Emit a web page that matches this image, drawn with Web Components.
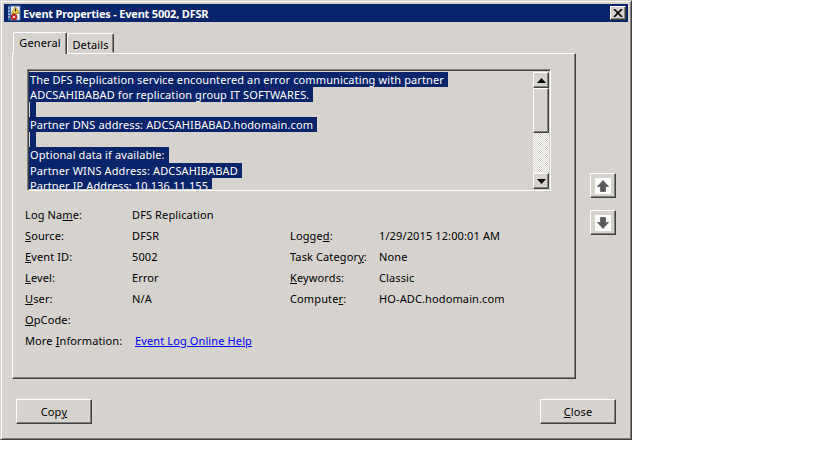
<!DOCTYPE html>
<html lang="en">

<head>
    <meta charset="UTF-8">
    <title>Event Properties</title>
    <style>
        html, body { margin: 0; background: #fff; }
        body { font: 11px "Noto Sans", "DejaVu Sans", sans-serif; letter-spacing: .12px; color: #000; }
    </style>
</head>

<body>
    <template id="field-row">
        <style>
            :host { display: grid; grid-template-columns: var(--label-width, 107px) 1fr; height: 21px; align-items: center; white-space: nowrap; }
        </style>
        <div><slot name="label"></slot></div>
        <div><slot></slot></div>
    </template>

    <script>
        const BEVEL = `border: 1px solid; border-color: #fff #404040 #404040 #fff; box-shadow: inset -1px -1px 0 #808080; background: #d6d3ce; box-sizing: border-box;`;

        class EvField extends HTMLElement {
            constructor() {
                super();
                this.attachShadow({ mode: 'open' }).appendChild(document.getElementById('field-row').content.cloneNode(true));
            }
        }

        class WinButton extends HTMLElement {
            constructor() {
                super();
                this.attachShadow({ mode: 'open' }).innerHTML = `
                    <style>
                        :host { display: flex; align-items: center; justify-content: center; width: 76px; height: 25px; ${BEVEL} }
                    </style>
                    <slot></slot>`;
            }
        }

        class ArrowButton extends HTMLElement {
            constructor() {
                super();
                this.attachShadow({ mode: 'open' });
            }

            connectedCallback() {
                const down = this.getAttribute('dir') === 'down';
                const pts = down ? '4.5,1.5 9.5,1.5 9.5,6.5 12.5,6.5 7,12.5 1.5,6.5 4.5,6.5' : '7,1.5 12.5,7.5 9.5,7.5 9.5,12.5 4.5,12.5 4.5,7.5 1.5,7.5';
                this.shadowRoot.innerHTML = `
                    <style>
                        :host { display: flex; align-items: center; justify-content: center; width: 26px; height: 25px; ${BEVEL} }
                        div { width: 16px; height: 16px; background: #fff; display: flex; align-items: center; justify-content: center; }
                        svg { display: block; }
                    </style>
                    <div><svg width="14" height="14" viewBox="0 0 14 14"><polygon points="${pts}" fill="#595959" stroke="#6e6e6e" stroke-width="1"/></svg></div>`;
            }
        }

        class EvScrollbar extends HTMLElement {
            constructor() {
                super();
                const arrow = pts => `<svg width="9" height="5" viewBox="0 0 9 5"><polygon points="${pts}" fill="#000"/></svg>`;
                this.attachShadow({ mode: 'open' }).innerHTML = `
                    <style>
                        :host { display: flex; flex-direction: column; width: 16px; height: 100%; flex: none; box-sizing: border-box;
                            background-color: #fff; background-image: conic-gradient(#d6d3ce 25%, #fff 0 50%, #d6d3ce 0 75%, #fff 0); background-size: 2px 2px; }
                        .b { ${BEVEL} width: 16px; display: flex; align-items: center; justify-content: center; flex: none; }
                        .arrow { height: 16px; }
                        .thumb { height: 45px; }
                        .gap { flex: 1; }
                    </style>
                    <div class="b arrow">${arrow('4.5,0 9,5 0,5')}</div>
                    <div class="b thumb"></div>
                    <div class="gap"></div>
                    <div class="b arrow">${arrow('0,0 9,0 4.5,5')}</div>`;
            }
        }

        class EvMessage extends HTMLElement {
            constructor() {
                super();
                this.attachShadow({ mode: 'open' }).innerHTML = `
                    <style>
                        :host { display: flex; height: 122px; width: 524px; box-sizing: border-box; border: 1px solid; border-color: #808080 #fff #fff #808080; box-shadow: inset 1px 1px 0 #404040; padding: 2px 1px 1px 1px; }
                        .text { flex: 1; overflow: hidden; min-width: 0; }
                        ::slotted(div) { background: #08246b; color: #fff; width: fit-content; height: 15.1px; line-height: 15px; white-space: pre; padding: 0 1px; }
                        ::slotted(.blank) { width: 6px; margin-left: 1px; padding: 0; }
                    </style>
                    <div class="text"><slot></slot></div>
                    <ev-scrollbar></ev-scrollbar>`;
            }
        }

        class EvTabs extends HTMLElement {
            constructor() {
                super();
                this.attachShadow({ mode: 'open' }).innerHTML = `
                    <style>
                        :host { display: flex; align-items: flex-end; height: 23px; padding-left: 1px; }
                        .tab { box-sizing: border-box; border: 1px solid; border-color: #fff #404040 transparent #fff; box-shadow: inset -1px 0 0 #808080; border-radius: 2px 2px 0 0; display: flex; align-items: center; justify-content: center; background: #d6d3ce; }
                        .on { width: 54px; height: 22px; margin-bottom: -1px; position: relative; z-index: 1; border-bottom: 0; padding-bottom: 2px; }
                        .off { width: 47px; height: 20px; padding-top: 2px; }
                    </style>
                    <div class="tab on">General</div>
                    <div class="tab off">Details</div>`;
            }
        }

        class EvTitlebar extends HTMLElement {
            constructor() {
                super();
                this.attachShadow({ mode: 'open' }).innerHTML = `
                    <style>
                        :host { display: flex; align-items: center; height: 18px; background: #08246b; color: #fff; font-weight: 700; letter-spacing: -.2px; padding: 0 2px 0 2px; white-space: nowrap; }
                        svg { flex: none; margin-right: 1px; display: block; }
                        span { flex: 1; }
                        .x { ${BEVEL} width: 16px; height: 14px; display: flex; align-items: center; justify-content: center; }
                    </style>
                    <svg width="16" height="16" viewBox="0 0 16 16">
                        <rect x="3" y="1" width="11" height="14" fill="#eef2fa" stroke="#5578b0"/>
                        <rect x="2" y="1" width="3" height="14" fill="#3a64a8"/>
                        <path d="M2 3h2M2 6h2M2 9h2M2 12h2" stroke="#dfe8f6"/>
                        <polygon points="9.5,1.5 13.5,8.5 5.5,8.5" fill="#f6cc3a" stroke="#8a6a10" stroke-width=".6"/>
                        <rect x="9" y="3.5" width="1" height="3" fill="#222"/>
                        <circle cx="8" cy="12" r="3" fill="#d8282c" stroke="#7a1014" stroke-width=".6"/>
                        <circle cx="8" cy="12" r="1.1" fill="#fff"/>
                    </svg>
                    <span><slot></slot></span>
                    <div class="x"><svg width="10" height="8" viewBox="0 0 10 8" style="margin:0"><path d="M1 0l8 8M9 0l-8 8" fill="none" stroke="#000" stroke-width="1.7"/></svg></div>`;
            }
        }

        class EvWindow extends HTMLElement {
            constructor() {
                super();
                this.attachShadow({ mode: 'open' }).innerHTML = `
                    <style>
                        :host { display: block; box-sizing: border-box; width: 632px; height: 440px; background: #d6d3ce; border: 1px solid; border-color: #d6d3ce #404040 #404040 #d6d3ce; box-shadow: inset 1px 1px 0 #fff, inset -1px -1px 0 #808080; padding: 3px; }
                    </style>
                    <slot></slot>`;
            }
        }

        class EvPanel extends HTMLElement {
            constructor() {
                super();
                this.attachShadow({ mode: 'open' }).innerHTML = `
                    <style>
                        :host { display: block; box-sizing: border-box; width: 565px; height: 326px; border: 1px solid; border-color: #fff #404040 #404040 #fff; box-shadow: inset -1px -1px 0 #808080; padding: 15px 0 0 14px; }
                    </style>
                    <slot></slot>`;
            }
        }

        customElements.define('ev-field', EvField);
        customElements.define('win-button', WinButton);
        customElements.define('arrow-button', ArrowButton);
        customElements.define('ev-scrollbar', EvScrollbar);
        customElements.define('ev-message', EvMessage);
        customElements.define('ev-tabs', EvTabs);
        customElements.define('ev-titlebar', EvTitlebar);
        customElements.define('ev-window', EvWindow);
        customElements.define('ev-panel', EvPanel);
    </script>

    <style>
        .content { padding: 8px 12px 0 8px; }
        .main { display: flex; }
        .side { display: flex; flex-direction: column; gap: 12px; padding: 120px 0 0 14px; }
        .fields { display: grid; grid-template-columns: 265px 1fr; margin: 13px 0 0 -2px; }
        .fields .col { display: flex; flex-direction: column; }
        .fields .right { padding-top: 21px; --label-width: 89px; }
        .more { --label-width: 110px; }
        .buttons { display: flex; justify-content: space-between; padding: 20px 0 0 4px; }
        a { color: #00f; }
        u { text-underline-offset: 1px; }
    </style>

    <ev-window>
        <ev-titlebar>Event Properties - Event 5002, DFSR</ev-titlebar>
        <div class="content">
            <ev-tabs></ev-tabs>
            <div class="main">
                <ev-panel>
                    <ev-message>
                        <div>The DFS Replication service encountered an error communicating with partner </div>
                        <div>ADCSAHIBABAD for replication group IT SOFTWARES. </div>
                        <div class="blank"> </div>
                        <div>Partner DNS address: ADCSAHIBABAD.hodomain.com </div>
                        <div class="blank"> </div>
                        <div>Optional data if available: </div>
                        <div>Partner WINS Address: ADCSAHIBABAD </div>
                        <div>Partner IP Address: 10.136.11.155 </div>
                    </ev-message>
                    <div class="fields">
                        <div class="col">
                            <ev-field><span slot="label">Log Na<u>m</u>e:</span>DFS Replication</ev-field>
                            <ev-field><span slot="label"><u>S</u>ource:</span>DFSR</ev-field>
                            <ev-field><span slot="label"><u>E</u>vent ID:</span>5002</ev-field>
                            <ev-field><span slot="label"><u>L</u>evel:</span>Error</ev-field>
                            <ev-field><span slot="label"><u>U</u>ser:</span>N/A</ev-field>
                            <ev-field><span slot="label"><u>O</u>pCode:</span></ev-field>
                            <ev-field class="more"><span slot="label">More <u>I</u>nformation:</span><a href="#">Event Log Online Help</a></ev-field>
                        </div>
                        <div class="col right">
                            <ev-field><span slot="label">Logge<u>d</u>:</span>1/29/2015 12:00:01 AM</ev-field>
                            <ev-field><span slot="label">Task Categor<u>y</u>:</span>None</ev-field>
                            <ev-field><span slot="label"><u>K</u>eywords:</span>Classic</ev-field>
                            <ev-field><span slot="label">Compute<u>r</u>:</span>HO-ADC.hodomain.com</ev-field>
                        </div>
                    </div>
                </ev-panel>
                <div class="side">
                    <arrow-button dir="up"></arrow-button>
                    <arrow-button dir="down"></arrow-button>
                </div>
            </div>
            <div class="buttons">
                <win-button>Cop<u>y</u></win-button>
                <win-button><u>C</u>lose</win-button>
            </div>
        </div>
    </ev-window>
</body>

</html>
